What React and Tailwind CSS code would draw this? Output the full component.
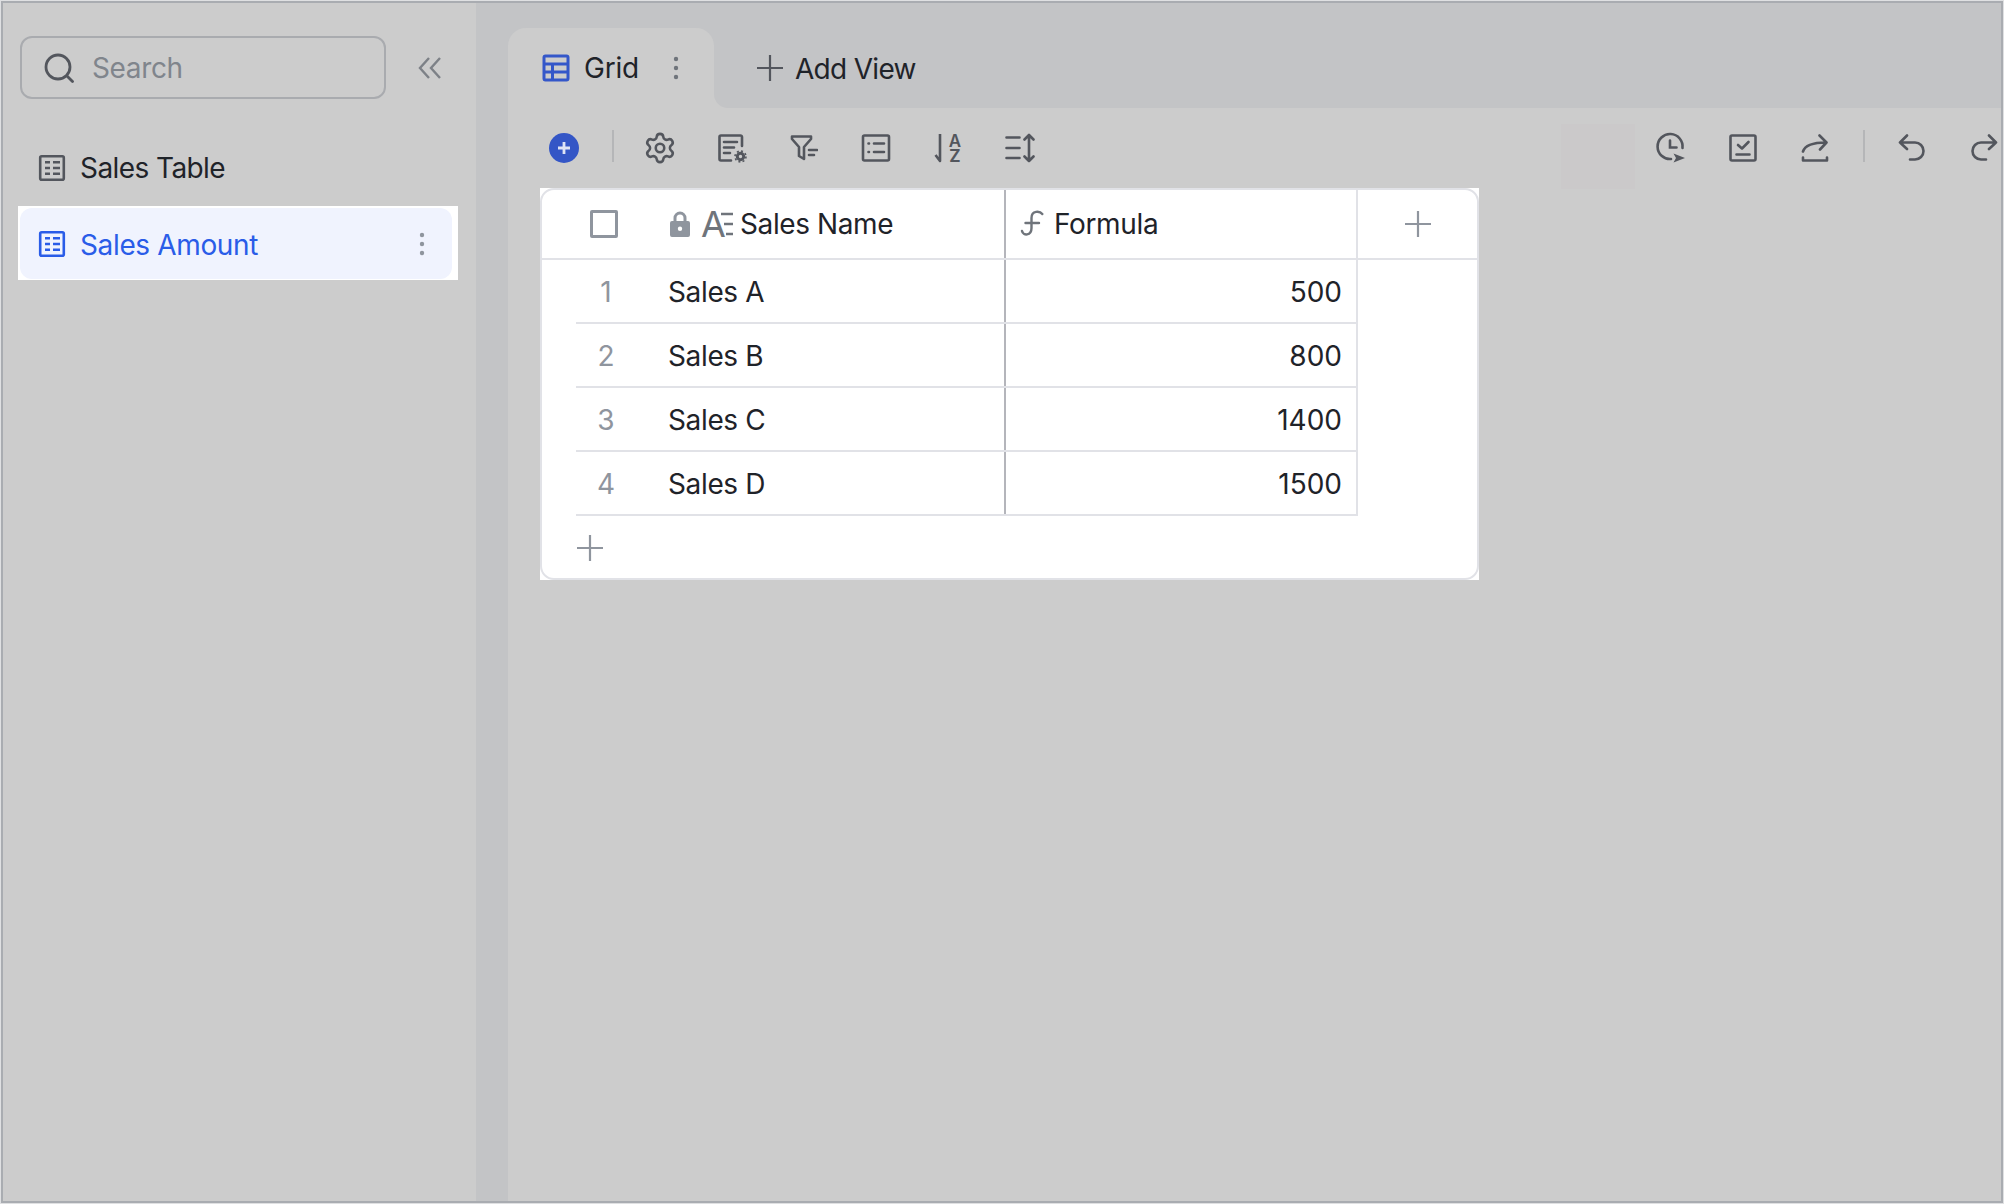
import { Settings } from 'lucide-react';

const ink = '#53565d';

const ListIcon = ({ className }) => (
  <svg width="28" height="28" viewBox="0 0 28 28" fill="none" stroke="currentColor" strokeWidth="2.6" className={className}>
    <rect x="2.2" y="2.2" width="23.6" height="23.6" rx="1.5" />
    <path d="M7 8.200h5M15 8.200h7M7 14h5M15 14h7M7 19.800h5M15 19.800h7" />
  </svg>
);

const Dots = ({ color = '#8f959e' }) => (
  <svg width="6" height="24" viewBox="0 0 6 24" fill={color}>
    <circle cx="3" cy="3" r="2.2" />
    <circle cx="3" cy="12" r="2.2" />
    <circle cx="3" cy="21" r="2.2" />
  </svg>
);

const Plus = ({ color, size = 28 }) => (
  <svg width={size} height={size} viewBox="0 0 28 28" fill="none" stroke={color} strokeWidth="2.2">
    <path d="M14 1v26M1 14h26" />
  </svg>
);

const Tool = ({ children, d, vb = '0 0 28 28' }) => (
  <div className="flex w-[72px] h-[80px] shrink-0 items-center justify-center">
    {children || (
      <svg width="28" height="28" viewBox={vb} fill="none" stroke={ink} strokeWidth="2.6" strokeLinecap="round" strokeLinejoin="round">
        <path d={d} />
      </svg>
    )}
  </div>
);

const rows = [
  ['1', 'Sales A', '500'],
  ['2', 'Sales B', '800'],
  ['3', 'Sales C', '1400'],
  ['4', 'Sales D', '1500'],
];

export default function App() {
  return (
    <div className="w-[2004px] h-[1204px] p-px bg-[#dfe0e2] overflow-hidden font-['Inter',sans-serif] text-[28px] text-[#1f2329]">
      <div className="flex w-full h-full border-2 border-[#a9acb1] bg-[#cccccc] overflow-hidden">
        {/* Sidebar */}
        <div className="w-[473px] shrink-0 flex flex-col pt-[33px]">
          <div className="flex items-center">
            <div className="ml-[17px] flex h-[63px] w-[366px] items-center rounded-[12px] border-2 border-[#a9abaf] pl-[22px]">
              <svg width="30" height="30" viewBox="0 0 30 30" fill="none" stroke={ink} strokeWidth="2.8" strokeLinecap="round">
                <circle cx="14" cy="14" r="12" />
                <path d="M23 23l5.500 5.500" />
              </svg>
              <span className="ml-[18px] tracking-[-0.35px] text-[#80858c]">Search</span>
            </div>
            <svg className="ml-[32px]" width="24" height="22" viewBox="0 0 24 22" fill="none" stroke="#7d8187" strokeWidth="2.4">
              <path d="M11 1L2 11l9 10M22 1l-9 10 9 10" />
            </svg>
          </div>
          <div className="mt-[34px] flex h-[70px] items-center pl-[35px]">
            <ListIcon className="text-[#53565d]" />
            <span className="ml-[14px] tracking-[-0.58px]">Sales Table</span>
          </div>
          <div className="mt-[3px] ml-[15px] h-[74px] w-[440px] bg-white pl-[2px] pt-[2px] pr-[6px] pb-px">
            <div className="flex h-full items-center rounded-[12px] bg-[#f0f3fe] pl-[18px] pr-[27px] text-[#2a5ce8]">
              <ListIcon />
              <span className="ml-[14px] pt-[2px] tracking-[-0.36px]">Sales Amount</span>
              <div className="ml-auto">
                <Dots />
              </div>
            </div>
          </div>
        </div>

        {/* Main */}
        <div className="flex-1 min-w-0 flex flex-col bg-[#c3c4c6]">
          <div className="flex h-[105px] shrink-0 items-end pl-[32px]">
            <div className="flex h-[80px] w-[206px] items-center rounded-t-[18px] bg-[#cccccc] pl-[34px]">
              <svg width="28" height="28" viewBox="0 0 28 28" fill="none" stroke="#3457c9" strokeWidth="3">
                <rect x="2" y="2" width="24" height="24" rx="1.500" />
                <path d="M2 10h24M2 18h24M10.500 10v16" />
              </svg>
              <span className="ml-[14px] tracking-[-0.2px]">Grid</span>
              <div className="ml-[34px]">
                <Dots color="#6f747b" />
              </div>
            </div>
            <div className="h-full flex-1 bg-[#cccccc]">
              <div className="flex h-full items-end rounded-bl-[14px] bg-[#c3c4c6] pb-[25px] pl-[42px]">
                <div className="flex h-[30px] items-center">
                  <Plus color={ink} />
                  <span className="ml-[11px] pt-[2px] tracking-[-0.7px]">Add View</span>
                </div>
              </div>
            </div>
          </div>

          <div className="ml-[32px] flex-1 bg-[#cccccc]">
            {/* Toolbar */}
            <div className="flex h-[80px] items-start">
              <div className="ml-[41px] mt-[25px] flex h-[30px] w-[30px] items-center justify-center rounded-full bg-[#3456c6]">
                <svg width="14" height="14" viewBox="0 0 14 14" stroke="#dfe4f5" strokeWidth="2.800">
                  <path d="M7 1v12M1 7h12" />
                </svg>
              </div>
              <div className="ml-[33px] mt-[22px] h-[32px] w-[2px] bg-[#b5b6b8]" />
              <div className="ml-[10px] flex">
                <Tool>
                  <Settings size={34} strokeWidth={1.8} color={ink} />
                </Tool>
                <Tool>
                  <svg width="30" height="30" viewBox="0 0 30 30" fill="none" stroke={ink} strokeWidth="2.600" strokeLinecap="round">
                    <path d="M25 13V4a1.500 1.500 0 0 0-1.500-1.500H4A1.500 1.500 0 0 0 2.500 4v22A1.500 1.500 0 0 0 4 27.500h10" />
                    <path d="M7 9h13M7 14.500h10M7 20h6" />
                    <circle cx="23.500" cy="23.500" r="3.200" strokeWidth="3" />
                    <circle cx="23.500" cy="23.500" r="5.500" strokeWidth="1.600" strokeDasharray="2 2.300" strokeLinecap="butt" />
                  </svg>
                </Tool>
                <Tool d="M2 2.500h19v2.500l-7 8v12l-5-3v-9l-7-8zM19 16h8M19 21h5" />
                <Tool>
                  <svg width="30" height="30" viewBox="0 0 30 30" fill="none" stroke={ink} strokeWidth="2.600" strokeLinecap="round">
                    <rect x="2" y="2.500" width="26" height="25" rx="1.500" />
                    <path d="M13 10.500h10M13 19h10M7.500 10.500h.5M7.500 19h.5" />
                  </svg>
                </Tool>
                <Tool>
                  <svg className="overflow-visible" width="30" height="30" viewBox="0 0 30 30" fill="none" stroke={ink} strokeWidth="2.600" strokeLinejoin="round">
                    <path d="M7 1v27L2.500 22" />
                    <text x="22" y="14" textAnchor="middle" fontSize="17" fontWeight="600" fontFamily="Inter" fill={ink} stroke="none">A</text>
                    <text x="22" y="29" textAnchor="middle" fontSize="17" fontWeight="700" fontFamily="Inter" fill={ink} stroke="none">Z</text>
                  </svg>
                </Tool>
                <Tool>
                  <svg width="30" height="30" viewBox="0 0 30 30" fill="none" stroke={ink} strokeWidth="2.600" strokeLinecap="round" strokeLinejoin="round">
                    <path d="M1.500 4.500h13M1.500 15h13M1.500 25h13" />
                    <path d="M24 2v26M19.500 6.500L24 2l4.500 4.500M19.500 23.500L24 28l4.500-4.500" />
                  </svg>
                </Tool>
              </div>

              <div className="ml-auto mr-[-19px] flex shrink-0 items-start">
                <div className="mt-[16px] h-[65px] w-[74px] bg-[#cbc9ca]" />
                <Tool>
                  <svg className="overflow-visible" width="30" height="30" viewBox="0 0 30 30" fill="none" stroke={ink} strokeWidth="2.600" strokeLinecap="round">
                    <path d="M15 26A12.500 12.500 0 1 1 26.500 15" />
                    <path d="M14 7.500v7h6.500" />
                    <path d="M17.500 20.500L29 25l-11.500 4.500 2.500-4.500z" fill={ink} stroke="none" />
                  </svg>
                </Tool>
                <Tool>
                  <svg width="28" height="28" viewBox="0 0 28 28" fill="none" stroke={ink} strokeWidth="2.600" strokeLinecap="round" strokeLinejoin="round">
                    <rect x="1.500" y="1.500" width="25" height="25" rx="1.500" />
                    <path d="M9 11l4 3.500L19.500 8M7.500 20.500h13" />
                  </svg>
                </Tool>
                <Tool d="M2 17.500C4 11 11 8.500 25 8.500M18.500 1.500l7 7-6.500 7M2 23.500v3h24v-3" />
                <div className="ml-[12px] mt-[22px] mr-[11px] h-[32px] w-[2px] bg-[#b5b6b8]" />
                <Tool d="M9 1.500L2 8.500l7 6.500M2 8.500h15a8.500 8.500 0 0 1 0 17h-5" />
                <Tool d="M19 1.500l7 7-7 6.500M26 8.500H11a8.500 8.500 0 0 0 0 17h5" />
              </div>
            </div>

            {/* Table */}
            <div className="ml-[32px] h-[392px] w-[939px] bg-white">
              <div className="flex h-full flex-col rounded-[14px] border-2 border-[#e1e2e7]">
                <div className="flex h-[70px] shrink-0 border-b-2 border-[#e1e2e7]">
                  <div className="flex w-[464px] items-center border-r-2 border-[#b4b5bb] pl-[48px]">
                    <div className="h-[28px] w-[28px] rounded-[2px] border-[3px] border-[#8f959e]" />
                    <svg className="ml-[52px]" width="20" height="26" viewBox="0 0 20 26" fill="#8f959e">
                      <path fillRule="evenodd" d="M2 10h1.500V7a6.500 6.500 0 0 1 13 0v3H18a2 2 0 0 1 2 2v12a2 2 0 0 1-2 2H2a2 2 0 0 1-2-2V12a2 2 0 0 1 2-2zm4.500 0h7V7a3.500 3.500 0 0 0-7 0zM10 20a2.200 2.200 0 1 0 0-4.400A2.200 2.200 0 0 0 10 20z" />
                    </svg>
                    <svg className="ml-[12px] overflow-visible" width="32" height="28" viewBox="0 0 32 28" fill="none" stroke="#6f747b" strokeWidth="2.400">
                      <text x="11.500" y="27" textAnchor="middle" fontSize="36" fontWeight="400" fontFamily="Inter" fill="#6f747b" stroke="none">A</text>
                      <path d="M19 4h12M22 14h9M24 24h7" />
                    </svg>
                    <span className="ml-[6px] tracking-[-0.4px]">Sales Name</span>
                  </div>
                  <div className="flex w-[352px] items-center border-r-2 border-[#e1e2e7] pl-[14px]">
                    <svg width="26" height="28" viewBox="0 0 26 28" fill="none" stroke="#6f747b" strokeWidth="2.400" strokeLinecap="round">
                      <path d="M22.300 4C20 1 11.500 0 11.500 8V18C11.500 26 3 26 2 21M5.500 13H19" />
                    </svg>
                    <span className="ml-[8px] tracking-[-0.36px]">Formula</span>
                  </div>
                  <div className="flex flex-1 items-center justify-center">
                    <Plus color="#8f959e" />
                  </div>
                </div>

                {rows.map(([n, name, val]) => (
                  <div key={n} className="ml-[34px] flex h-[64px] w-[782px] shrink-0 border-b-2 border-[#e1e2e7]">
                    <div className="flex w-[430px] items-center border-r-2 border-[#b4b5bb] pt-[2px]">
                      <span className="w-[60px] text-center text-[#8f959e]">{n}</span>
                      <span className="pl-[32px] tracking-[-0.36px]">{name}</span>
                    </div>
                    <div className="flex w-[352px] items-center justify-end border-r-2 border-[#e1e2e7] pr-[14px] pt-[2px]">{val}</div>
                  </div>
                ))}

                <div className="flex flex-1 items-center pl-[34px] pt-[2px]">
                  <Plus color="#8f959e" />
                </div>
              </div>
            </div>
          </div>
        </div>
      </div>
    </div>
  );
}
